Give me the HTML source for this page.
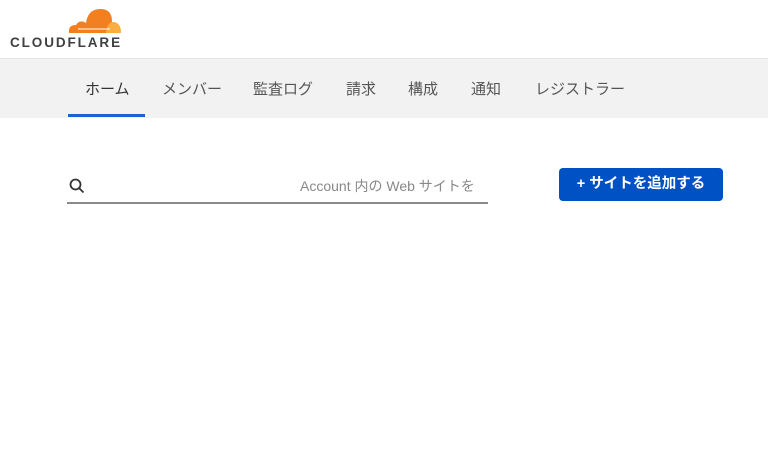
<!DOCTYPE html>
<html><head><meta charset="utf-8"><style>
body{margin:0;width:768px;height:475px;background:#fff;font-family:"Liberation Sans","Noto Sans CJK JP",sans-serif;position:relative;overflow:hidden}
.logo{position:absolute;left:10px;top:35px;font-weight:bold;font-size:13.5px;letter-spacing:1.9px;color:#404041}
.nav{position:absolute;left:0;top:58px;width:768px;height:59px;background:#f2f2f2;border-top:1px solid #e4e4e4}
.nav span{position:absolute;top:19px;font-size:15px;color:#555}
.ul{position:absolute;left:68px;top:114px;width:77px;height:3px;background:#1a62d6}
.search{position:absolute;left:67px;top:202px;width:421px;height:2px;background:#8a8a8a}
.ph{position:absolute;left:300px;top:176px;font-size:14px;color:#888}
.btn{position:absolute;left:559px;top:168px;width:164px;height:33px;background:#0051c3;border-radius:4px;color:#fff;font-size:14.5px;font-weight:bold;text-align:center;line-height:33px}
</style></head><body>
<svg style="position:absolute;left:66px;top:5px" width="56" height="30" viewBox="0 0 56 30">
<path d="M3 28 Q2 20 10 20 Q14 14 20 18 Q22 3 36 4 Q46 5 46 16 L44 28 Z" fill="#f38020"/>
<path d="M40 28 Q41 17 48 17 Q55 18 55 28 Z" fill="#faae40"/>
<line x1="12" y1="24" x2="44" y2="24" stroke="#fff" stroke-width="1"/>
</svg>
<div class="logo">CLOUDFLARE</div>
<div class="nav">
<span style="left:85px;color:#333">ホーム</span>
<span style="left:162px">メンバー</span>
<span style="left:253px">監査ログ</span>
<span style="left:346px">請求</span>
<span style="left:408px">構成</span>
<span style="left:471px">通知</span>
<span style="left:535px">レジストラー</span>
</div>
<div class="ul"></div>
<svg style="position:absolute;left:69px;top:178px" width="16" height="16" viewBox="0 0 16 16"><circle cx="6.5" cy="6.5" r="5" fill="none" stroke="#333" stroke-width="1.8"/><line x1="10" y1="10" x2="14.5" y2="14.5" stroke="#333" stroke-width="1.8"/></svg>
<div class="ph">Account 内の Web サイトを</div>
<div style="position:absolute;left:480px;top:170px;width:10px;height:30px;background:#fff"></div>
<div class="search"></div>
<div class="btn">+ サイトを追加する</div>
</body></html>
